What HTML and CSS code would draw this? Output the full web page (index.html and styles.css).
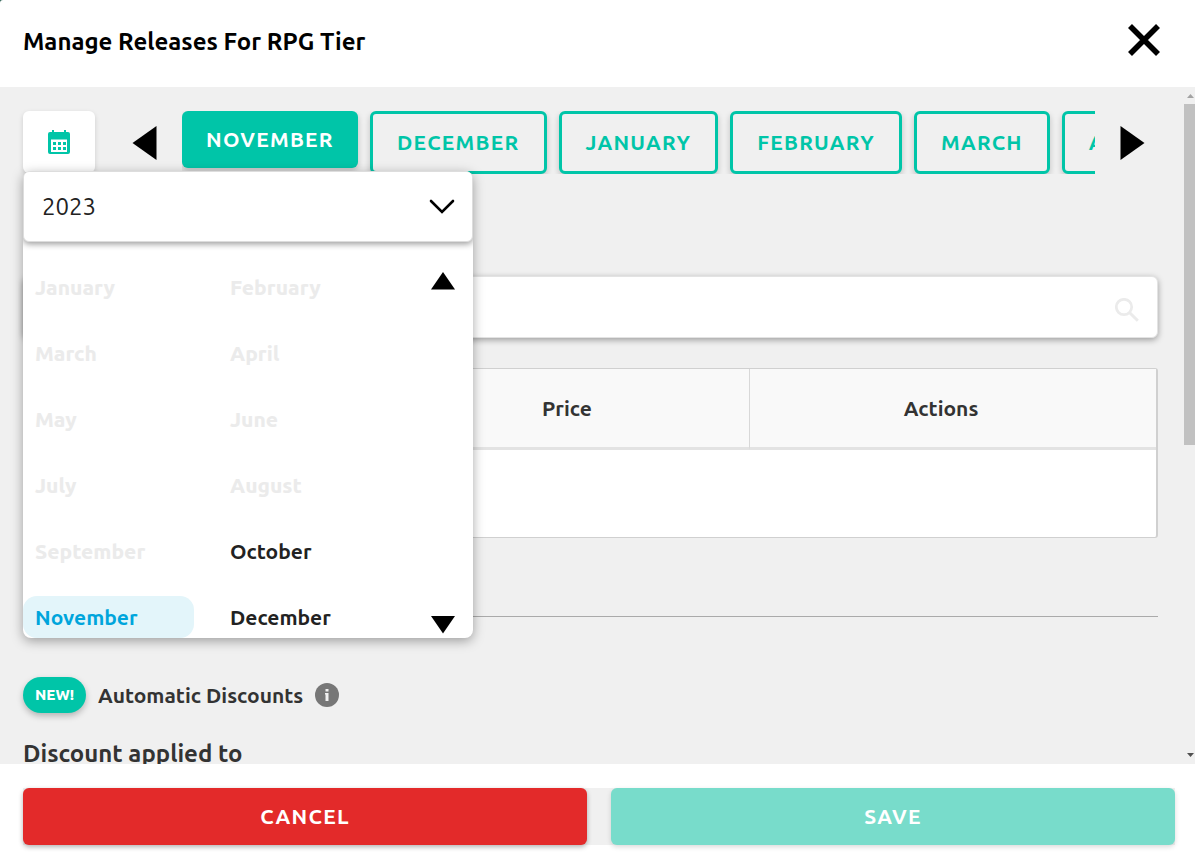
FILE: index.html
```html
<!doctype html>
<html lang="en">
  <head>
    <meta charset="UTF-8" />
    <meta name="viewport" content="width=device-width, initial-scale=1" />
    <title>Manage Releases</title>
    <link rel="stylesheet" href="styles.css">
  </head>
  <body>
    <div class="modal">
      <header class="modal-header">
        <h1 class="modal-title">Manage Releases For RPG Tier</h1>
        <button type="button" class="icon-button" aria-label="Close">
          <svg width="34" height="34" viewBox="0 0 34 34">
            <path d="M3 3L31 31M31 3L3 31" stroke="#000" stroke-width="5.6" fill="none" />
          </svg>
        </button>
      </header>

      <div class="modal-body">
        <main class="content">
          <div class="month-bar">
            <div class="picker">
              <button type="button" class="calendar-btn" aria-label="Pick a month">
                <svg width="24" height="24" viewBox="0 0 24 24">
                  <path fill="#00c5a8" fill-rule="evenodd" d="M5 0h2v2h10V0h2v2h2a2 2 0 0 1 2 2v18a2 2 0 0 1-2 2H3a2 2 0 0 1-2-2V4a2 2 0 0 1 2-2h2zM4 9.500v12.500h16V9.500z" />
                  <path fill="#00c5a8" d="M6 12h3v3H6zM11 12h3v3h-3zM16 12h3v3h-3zM6 17h3v3H6zM11 17h3v3h-3zM16 17h3v3h-3z" />
                </svg>
              </button>

              <!-- Month picker dropdown -->
              <div class="picker-panel">
                <div class="year-field">
                  <select class="year-select" aria-label="Year">
                    <option>2023</option>
                  </select>
                  <svg class="year-chevron" width="26" height="16" viewBox="0 0 26 16">
                    <path d="M2 2L13 13L24 2" stroke="#000" stroke-width="2.600" stroke-linecap="round" fill="none" />
                  </svg>
                </div>
                <div class="picker-body">
                  <div class="picker-months">
                    <button type="button" class="picker-month" disabled>January</button>
                    <button type="button" class="picker-month" disabled>February</button>
                    <button type="button" class="picker-month" disabled>March</button>
                    <button type="button" class="picker-month" disabled>April</button>
                    <button type="button" class="picker-month" disabled>May</button>
                    <button type="button" class="picker-month" disabled>June</button>
                    <button type="button" class="picker-month" disabled>July</button>
                    <button type="button" class="picker-month" disabled>August</button>
                    <button type="button" class="picker-month" disabled>September</button>
                    <button type="button" class="picker-month">October</button>
                    <button type="button" class="picker-month selected">November</button>
                    <button type="button" class="picker-month">December</button>
                  </div>
                  <div class="picker-arrows">
                    <button type="button" class="icon-button" aria-label="Previous year">
                      <svg width="24" height="18" viewBox="0 0 24 18"><path d="M12 0L24 17.500H0z" /></svg>
                    </button>
                    <button type="button" class="icon-button" aria-label="Next year">
                      <svg width="24" height="18" viewBox="0 0 24 18"><path d="M0 0H24L12 17.500z" /></svg>
                    </button>
                  </div>
                </div>
              </div>
            </div>

            <button type="button" class="icon-button month-arrow" aria-label="Previous months">
              <svg width="25" height="34" viewBox="0 0 25 34"><path d="M24.500 0V34L0.500 17z" /></svg>
            </button>
            <div class="month-list">
              <button type="button" class="month-btn active">NOVEMBER</button>
              <button type="button" class="month-btn">DECEMBER</button>
              <button type="button" class="month-btn">JANUARY</button>
              <button type="button" class="month-btn">FEBRUARY</button>
              <button type="button" class="month-btn">MARCH</button>
              <button type="button" class="month-btn">APRIL</button>
            </div>
            <button type="button" class="icon-button month-arrow" aria-label="Next months">
              <svg width="25" height="34" viewBox="0 0 25 34"><path d="M0.500 0V34L24.500 17z" /></svg>
            </button>
          </div>

          <div class="search">
            <input type="search" class="search-input" aria-label="Search releases">
            <svg class="search-icon" width="24" height="24" viewBox="0 0 24 24">
              <circle cx="9" cy="9" r="7.700" stroke="#ebebeb" stroke-width="2.700" fill="none" />
              <path d="M14.500 14.500L22.800 22.800" stroke="#ebebeb" stroke-width="3" fill="none" />
            </svg>
          </div>

          <table class="releases">
            <colgroup>
              <col class="col-name">
              <col>
              <col class="col-actions">
            </colgroup>
            <thead>
              <tr>
                <th></th>
                <th>Price</th>
                <th>Actions</th>
              </tr>
            </thead>
            <tbody>
              <tr>
                <td colspan="3"></td>
              </tr>
            </tbody>
          </table>

          <hr class="divider">

          <section class="discounts">
            <div class="discounts-heading">
              <span class="badge">NEW!</span>
              <h2 class="discounts-title">Automatic Discounts</h2>
              <svg class="info-icon" width="24" height="24" viewBox="0 0 24 24">
                <circle cx="12" cy="12" r="12" fill="#777" />
                <path d="M10.500 6h3v2.500h-3zM10 10h3.500v8h-3v-6.500H10z" fill="#f0f0f0" />
              </svg>
            </div>
            <h2 class="discounts-label">Discount applied to</h2>
          </section>
        </main>

        <div class="scrollbar" aria-hidden="true">
          <svg width="11" height="17" viewBox="0 0 11 17"><path d="M3 11L6.500 7L10 11z" fill="#a3a3a3" /></svg>
          <div class="scrollbar-track"><div class="scrollbar-thumb"></div></div>
          <svg width="11" height="17" viewBox="0 0 11 17"><path d="M3 6H10L6.500 10z" fill="#505050" /></svg>
        </div>
      </div>

      <footer class="modal-footer">
        <div class="footer-actions">
          <button type="button" class="action-btn cancel">CANCEL</button>
          <button type="button" class="action-btn save" disabled>SAVE</button>
        </div>
      </footer>
    </div>
  </body>
</html>
```

FILE: styles.css
```css
* {
  box-sizing: border-box;
}

body {
  margin: 0;
  background: #2f6355;
  font-family: Ubuntu, "Noto Sans", sans-serif;
  font-size: 21px;
  color: #333;
}

button,
input,
select {
  font: inherit;
}

h1,
h2 {
  margin: 0;
}

svg {
  display: block;
}

.modal {
  display: flex;
  flex-direction: column;
  height: 100vh;
  background: white;
  border-top-left-radius: 3px;
  overflow: hidden;
}

.modal-header {
  display: flex;
  justify-content: space-between;
  align-items: flex-start;
  padding: 23px 34px 26px 23px;
}

.modal-title {
  font-size: 24px;
  line-height: 38px;
  font-weight: 700;
  color: #000;
}

.icon-button {
  padding: 0;
  border: none;
  background: none;
  cursor: pointer;
}

.modal-body {
  flex: 1;
  display: flex;
  min-height: 0;
  background: #f0f0f0;
}

.content {
  flex: 1;
  min-width: 0;
  padding: 24px 26px 24px 23px;
  overflow-y: auto;
  scrollbar-width: none;
}

/* Months */
.month-bar {
  display: flex;
  align-items: flex-start;
}

.picker {
  position: relative;
}

.calendar-btn {
  display: flex;
  justify-content: center;
  align-items: center;
  width: 72px;
  height: 62px;
  border: none;
  border-radius: 6px;
  background: white;
  box-shadow: 0 2px 5px rgba(0, 0, 0, 0.15);
  cursor: pointer;
}

.month-arrow {
  height: 64px;
}

.picker + .month-arrow {
  margin: 0 25px 0 37px;
}

.month-list + .month-arrow {
  margin: 0 13px 0 25px;
}

.month-list {
  flex: 1;
  display: flex;
  align-items: flex-start;
  gap: 12px;
  min-width: 0;
  overflow: hidden;
}

.month-btn {
  flex: none;
  padding: 15px 24px;
  border: 3px solid #00c5a8;
  border-radius: 6px;
  background: #f0f0f0;
  box-shadow: 0 3px 6px rgba(0, 0, 0, 0.2);
  color: #00c5a8;
  font-size: 21px;
  line-height: 27px;
  font-weight: 700;
  letter-spacing: 0.06em;
  cursor: pointer;
}

.month-btn.active {
  border: none;
  background: #00c5a8;
  color: white;
}

/* Month picker */
.picker-panel {
  position: absolute;
  top: 60px;
  left: 0;
  z-index: 2;
  width: 450px;
  border-radius: 8px;
  background: white;
  box-shadow: 0 3px 12px rgba(0, 0, 0, 0.35);
  overflow: hidden;
}

.year-field {
  position: relative;
}

.year-select {
  display: block;
  width: 100%;
  height: 71px;
  padding: 0 18px;
  border: 1px solid #ddd;
  border-radius: 6px;
  background: white;
  box-shadow: 0 2px 6px rgba(0, 0, 0, 0.4);
  color: #222;
  font-size: 24px;
  appearance: none;
}

.year-chevron {
  position: absolute;
  top: 28px;
  right: 18px;
  pointer-events: none;
}

.picker-body {
  display: flex;
  justify-content: space-between;
  padding: 24px 18px 0 0;
}

.picker-months {
  display: grid;
  grid-template-columns: 171px 171px;
  gap: 24px;
}

.picker-month {
  padding: 0 12px;
  border: none;
  border-radius: 14px;
  background: none;
  color: #222;
  font-size: 21px;
  line-height: 42px;
  font-weight: 700;
  text-align: left;
  cursor: pointer;
}

.picker-month:disabled {
  color: #ebebeb;
  font-weight: 800;
  cursor: default;
}

.picker-month.selected {
  background: #e3f5fa;
  color: #00a5dc;
}

.picker-arrows {
  display: flex;
  flex-direction: column;
  justify-content: space-between;
  padding: 6px 0 4px;
}

/* Search */
.search {
  position: relative;
  margin-top: 101px;
}

.search-input {
  display: block;
  width: 100%;
  height: 62px;
  padding: 0 60px 0 18px;
  border: 1px solid #e3e3e3;
  border-radius: 6px;
  background: white;
  box-shadow: 0 2px 6px rgba(0, 0, 0, 0.35);
}

.search-icon {
  position: absolute;
  top: 22px;
  right: 19px;
}

/* Table */
.releases {
  width: 100%;
  margin-top: 30px;
  border: 1px solid #d0d0d0;
  border-right-width: 2px;
  border-radius: 3px;
  border-spacing: 0;
  background: white;
  table-layout: fixed;
}

.col-name {
  width: 34%;
}

.col-actions {
  width: 406px;
}

.releases th {
  height: 81px;
  padding: 0 24px 0 0;
  border-right: 1px solid #d8d8d8;
  border-bottom: 3px solid #e3e3e3;
  background: #f9f9f9;
  font-size: 21px;
  font-weight: 700;
}

.releases th:last-child {
  border-right: none;
}

.releases td {
  height: 87px;
}

.divider {
  height: 1px;
  margin: 78px 0 60px;
  border: none;
  background: #aaa;
}

/* Discounts */
.discounts-heading {
  display: flex;
  align-items: center;
  gap: 12px;
}

.badge {
  padding: 0 12px;
  border-radius: 18px;
  background: #00c5a8;
  box-shadow: 0 3px 6px rgba(0, 0, 0, 0.25);
  color: white;
  font-size: 15px;
  line-height: 36px;
  font-weight: 800;
}

.discounts-title {
  font-size: 21px;
  line-height: 27px;
  font-weight: 700;
}

.discounts-label {
  margin-top: 24px;
  font-size: 24px;
  line-height: 34px;
  font-weight: 700;
}

/* Scrollbar */
.scrollbar {
  display: flex;
  flex-direction: column;
  width: 11px;
}

.scrollbar-track {
  flex: 1;
}

.scrollbar-thumb {
  height: 53%;
  background: #c1c1c1;
}

/* Footer */
.modal-footer {
  padding: 24px 20px 10px 23px;
}

.footer-actions {
  display: grid;
  grid-template-columns: 1fr 1fr;
  gap: 24px;
  background: #f0f0f0;
}

.action-btn {
  padding: 15px 24px;
  border: none;
  border-radius: 6px;
  box-shadow: 0 2px 5px rgba(0, 0, 0, 0.3);
  color: white;
  font-size: 21px;
  line-height: 27px;
  font-weight: 700;
  letter-spacing: 0.06em;
  cursor: pointer;
}

.cancel {
  background: #e32a2a;
}

.save {
  background: #78dccb;
  box-shadow: 0 2px 5px rgba(0, 0, 0, 0.15);
  cursor: default;
}
```
